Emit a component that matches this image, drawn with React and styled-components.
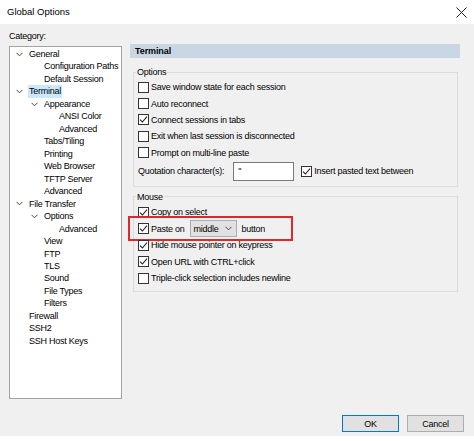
import React from 'react';
import styled, { createGlobalStyle } from 'styled-components';

const FONT = `"Liberation Sans", Arial, sans-serif`;

const GlobalStyle = createGlobalStyle`
  html, body { margin: 0; padding: 0; background: #fff; }
  body { font-family: ${FONT}; font-size: 9px; letter-spacing: -0.25px; color: #000; }
  * { box-sizing: border-box; }
`;

const Window = styled.div`
  width: 474px;
  height: 441px;
  display: flex;
  flex-direction: column;
  background: #fff;
  overflow: hidden;
`;

const TitleBar = styled.div`
  height: 24px;
  flex: none;
  display: flex;
  align-items: center;
  justify-content: space-between;
  padding: 0 6px 0 7px;
  background: #fff;
`;

const Title = styled.span`
  font-size: 9.5px;
  letter-spacing: 0;
  line-height: 12px;
`;

const CloseButton = styled.div`
  width: 14px;
  height: 14px;
  display: flex;
  align-items: center;
  justify-content: center;
`;

const Body = styled.div`
  height: 412px;
  flex: none;
  background: #f0f0f0;
  display: flex;
  flex-direction: column;
`;

const Main = styled.div`
  display: flex;
  align-items: flex-start;
  gap: 8px;
  padding: 6px 14px 0 9px;
`;

const CategoryColumn = styled.div`
  width: 113px;
  display: flex;
  flex-direction: column;
  gap: 4px;
`;

const CategoryLabel = styled.div`
  line-height: 12px;
`;

const TreeBox = styled.div`
  height: 353px;
  background: #fff;
  border: 1px solid #a3a3a3;
  padding-top: 1px;
`;

const TreeRow = styled.div`
  height: 12.48px;
  line-height: 12.48px;
  display: flex;
  align-items: center;
  padding-left: ${p => 4 + p.$level * 15}px;
  white-space: nowrap;
`;

const Expander = styled.span`
  width: 11px;
  height: 12px;
  flex: none;
  display: flex;
  align-items: center;
  justify-content: center;
`;

const TreeLabel = styled.span`
  margin-left: 3px;
  padding: 0 1px;
  background: ${p => (p.$selected ? '#cce8ff' : 'transparent')};
`;

const Panel = styled.div`
  width: 330px;
  margin-top: 14px;
  display: flex;
  flex-direction: column;
`;

const PanelHeader = styled.div`
  height: 14px;
  line-height: 14px;
  padding-left: 5px;
  background: #c9d7e4;
  font-weight: bold;
  letter-spacing: -0.1px;
`;

const Group = styled.fieldset`
  margin: ${p => p.$top}px 2px 0 3px;
  padding: 1px 4px ${p => p.$bottom}px 4px;
  border: 1px solid #dcdcdc;
  min-width: 0;
`;

const Legend = styled.legend`
  padding: 0 1px;
  margin-left: -2px;
  line-height: 12px;
`;

const Row = styled.div`
  position: relative;
  height: ${p => p.$h || 16.4}px;
  display: flex;
  align-items: center;
  white-space: nowrap;
`;

const Box = styled.span`
  width: 11px;
  height: 11px;
  flex: none;
  border: 1px solid #333;
  background: #fff;
  margin-right: 2px;
  display: flex;
  align-items: center;
  justify-content: center;
`;

const Spacer = styled.span`
  width: ${p => p.$w}px;
  flex: none;
`;

const TextInput = styled.div`
  width: 61px;
  height: 19px;
  background: #fff;
  border: 1px solid #7a7a7a;
  padding: 2px 0 0 4px;
  line-height: 12px;
`;

const Select = styled.div`
  width: 47px;
  height: 17px;
  background: #e1e1e1;
  border: 1px solid #adadad;
  display: flex;
  align-items: center;
  justify-content: space-between;
  padding: 0 4px 0 3px;
  margin-right: 5px;
`;

const Annotation = styled.span`
  position: absolute;
  left: -10px;
  top: -4px;
  width: 165px;
  height: 25px;
  border: 2px solid #e1262c;
  pointer-events: none;
`;

const Footer = styled.div`
  margin-top: auto;
  display: flex;
  justify-content: flex-end;
  gap: 8px;
  padding: 0 10px 4px 0;
`;

const Button = styled.div`
  width: 57px;
  height: 17px;
  display: flex;
  align-items: center;
  justify-content: center;
  background: #e1e1e1;
  border: 1px solid ${p => (p.$primary ? '#0078d7' : '#adadad')};
`;

const Chevron = () => (
  <svg width="7" height="5" viewBox="0 0 7 5">
    <path d="M0.5 0.8 L3.5 3.8 L6.5 0.8" fill="none" stroke="#444" strokeWidth="1" />
  </svg>
);

const Check = () => (
  <svg width="9" height="9" viewBox="0 0 9 9">
    <path d="M1 4.6 L3.4 7 L8 1.6" fill="none" stroke="#222" strokeWidth="1.1" />
  </svg>
);

const Checkbox = ({ checked }) => <Box>{checked && <Check />}</Box>;

const tree = [
  { label: 'General', level: 0, expanded: true },
  { label: 'Configuration Paths', level: 1 },
  { label: 'Default Session', level: 1 },
  { label: 'Terminal', level: 0, expanded: true, selected: true },
  { label: 'Appearance', level: 1, expanded: true },
  { label: 'ANSI Color', level: 2 },
  { label: 'Advanced', level: 2 },
  { label: 'Tabs/Tiling', level: 1 },
  { label: 'Printing', level: 1 },
  { label: 'Web Browser', level: 1 },
  { label: 'TFTP Server', level: 1 },
  { label: 'Advanced', level: 1 },
  { label: 'File Transfer', level: 0, expanded: true },
  { label: 'Options', level: 1, expanded: true },
  { label: 'Advanced', level: 2 },
  { label: 'View', level: 1 },
  { label: 'FTP', level: 1 },
  { label: 'TLS', level: 1 },
  { label: 'Sound', level: 1 },
  { label: 'File Types', level: 1 },
  { label: 'Filters', level: 1 },
  { label: 'Firewall', level: 0 },
  { label: 'SSH2', level: 0 },
  { label: 'SSH Host Keys', level: 0 },
];

const options = [
  { label: 'Save window state for each session', checked: false },
  { label: 'Auto reconnect', checked: false },
  { label: 'Connect sessions in tabs', checked: true },
  { label: 'Exit when last session is disconnected', checked: false },
  { label: 'Prompt on multi-line paste', checked: false },
];

export default function App() {
  return (
    <>
      <GlobalStyle />
      <Window>
        <TitleBar>
          <Title>Global Options</Title>
          <CloseButton>
            <svg width="11" height="11" viewBox="0 0 11 11">
              <path d="M0.5 0.5 L10.5 10.5 M10.5 0.5 L0.5 10.5" stroke="#222" strokeWidth="1" />
            </svg>
          </CloseButton>
        </TitleBar>
        <Body>
          <Main>
            <CategoryColumn>
              <CategoryLabel>Category:</CategoryLabel>
              <TreeBox>
                {tree.map((n, i) => (
                  <TreeRow key={i} $level={n.level}>
                    <Expander>{n.expanded && <Chevron />}</Expander>
                    <TreeLabel $selected={n.selected}>{n.label}</TreeLabel>
                  </TreeRow>
                ))}
              </TreeBox>
            </CategoryColumn>
            <Panel>
              <PanelHeader>Terminal</PanelHeader>
              <Group $top={8} $bottom={4}>
                <Legend>Options</Legend>
                {options.map((o, i) => (
                  <Row key={i}>
                    <Checkbox checked={o.checked} />
                    {o.label}
                  </Row>
                ))}
                <Row $h={21}>
                  Quotation character(s):
                  <Spacer $w={9} />
                  <TextInput>"</TextInput>
                  <Spacer $w={7} />
                  <Checkbox checked />
                  Insert pasted text between
                </Row>
              </Group>
              <Group $top={4} $bottom={5}>
                <Legend>Mouse</Legend>
                <Row $h={16.5}>
                  <Checkbox checked />
                  Copy on select
                </Row>
                <Row $h={16.5}>
                  <Checkbox checked />
                  Paste on
                  <Spacer $w={5} />
                  <Select>
                    <span>middle</span>
                    <Chevron />
                  </Select>
                  button
                  <Annotation />
                </Row>
                <Row $h={16.5}>
                  <Checkbox checked />
                  Hide mouse pointer on keypress
                </Row>
                <Row $h={16.5}>
                  <Checkbox checked />
                  Open URL with CTRL+click
                </Row>
                <Row $h={16.5}>
                  <Checkbox />
                  Triple-click selection includes newline
                </Row>
              </Group>
            </Panel>
          </Main>
          <Footer>
            <Button $primary>OK</Button>
            <Button>Cancel</Button>
          </Footer>
        </Body>
      </Window>
    </>
  );
}
